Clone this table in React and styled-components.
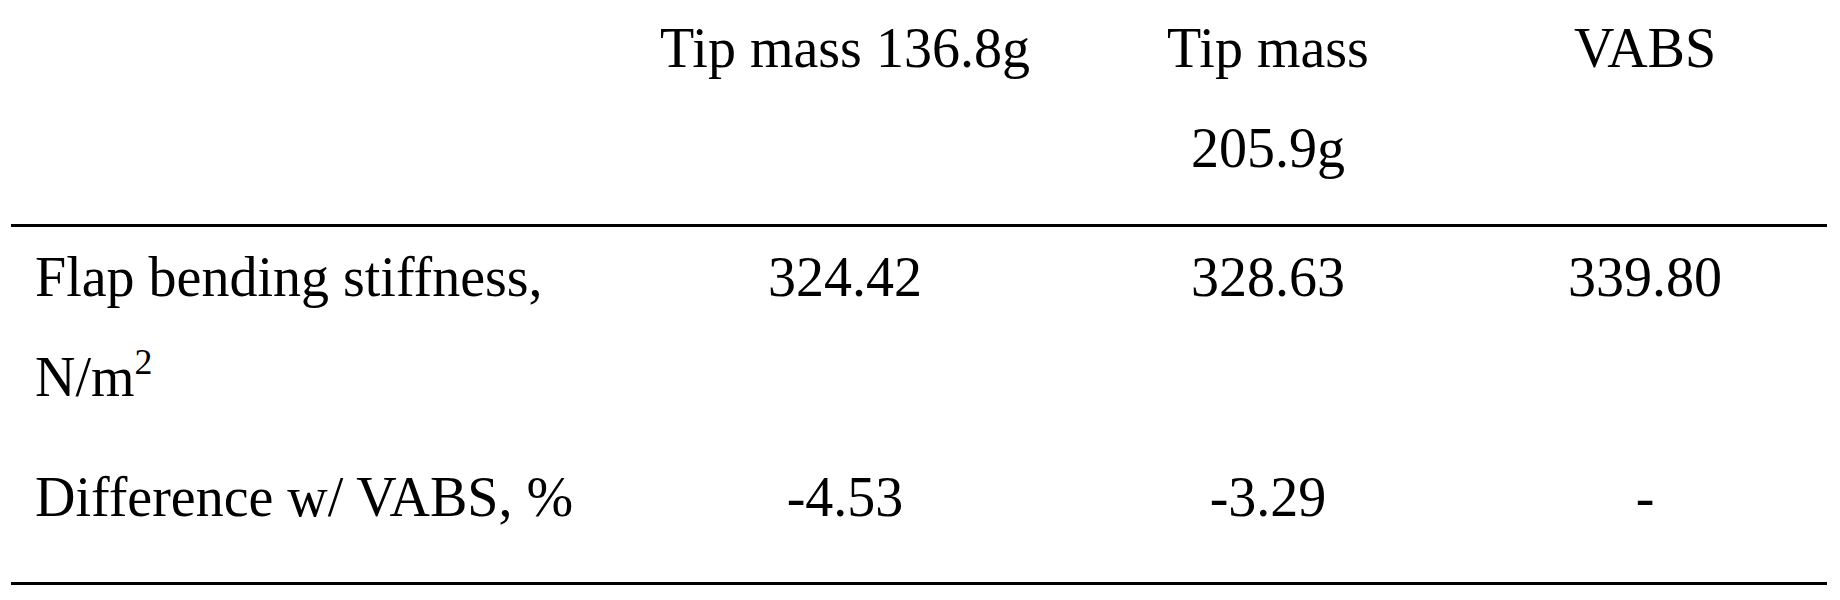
import React from 'react';
import styled, { createGlobalStyle } from 'styled-components';

const GlobalStyle = createGlobalStyle`
    html, body {
        margin: 0;
        padding: 0;
        background: #ffffff;
    }

    body {
        width: 1840px;
        height: 600px;
        overflow: hidden;
        font-family: "Liberation Serif", "Times New Roman", serif;
        color: #000000;
    }
`

const Table = styled.table`
    width: 1816px;
    margin: -2px 0 0 11px;
    border-collapse: collapse;
    table-layout: fixed;

    font-size: 56px;
    line-height: 100px;
`

const HeadCell = styled.th`
    padding: 0 24px 26px;
    border-bottom: 3px solid #000;

    font-weight: 400;
    text-align: center;
    vertical-align: top;
`

const Cell = styled.td`
    padding: ${props => props.last ? '0 10px 35px' : '0 10px 20px'};
    padding-left: ${props => props.label ? '24px' : '10px'};
    border-bottom: ${props => props.last ? '3px solid #000' : 'none'};

    text-align: ${props => props.label ? 'left' : 'center'};
    vertical-align: top;
`

const Unit = styled.span`
    white-space: nowrap;
`

const Sup = styled.sup`
    font-size: 0.64em;
    line-height: 0;
    vertical-align: 0.62em;
`

const columns = [606, 456, 390, 364];

const rows = [
    {
        label: <>Flap bending stiffness, <Unit>N/m<Sup>2</Sup></Unit></>,
        values: ['324.42', '328.63', '339.80'],
    },
    {
        label: 'Difference w/ VABS, %',
        values: ['-4.53', '-3.29', '-'],
    },
];

const App = () => {
    return (
        <>
            <GlobalStyle />
            <Table>
                <colgroup>
                    {columns.map((w, i) => <col key={i} width={w} />)}
                </colgroup>
                <thead>
                    <tr>
                        <HeadCell />
                        <HeadCell>Tip mass 136.8g</HeadCell>
                        <HeadCell>Tip mass 205.9g</HeadCell>
                        <HeadCell>VABS</HeadCell>
                    </tr>
                </thead>
                <tbody>
                    {rows.map((row, r) => (
                        <tr key={r}>
                            <Cell label last={r === rows.length - 1}>{row.label}</Cell>
                            {row.values.map((v, i) => (
                                <Cell key={i} last={r === rows.length - 1}>{v}</Cell>
                            ))}
                        </tr>
                    ))}
                </tbody>
            </Table>
        </>
    );
};

export default App;
